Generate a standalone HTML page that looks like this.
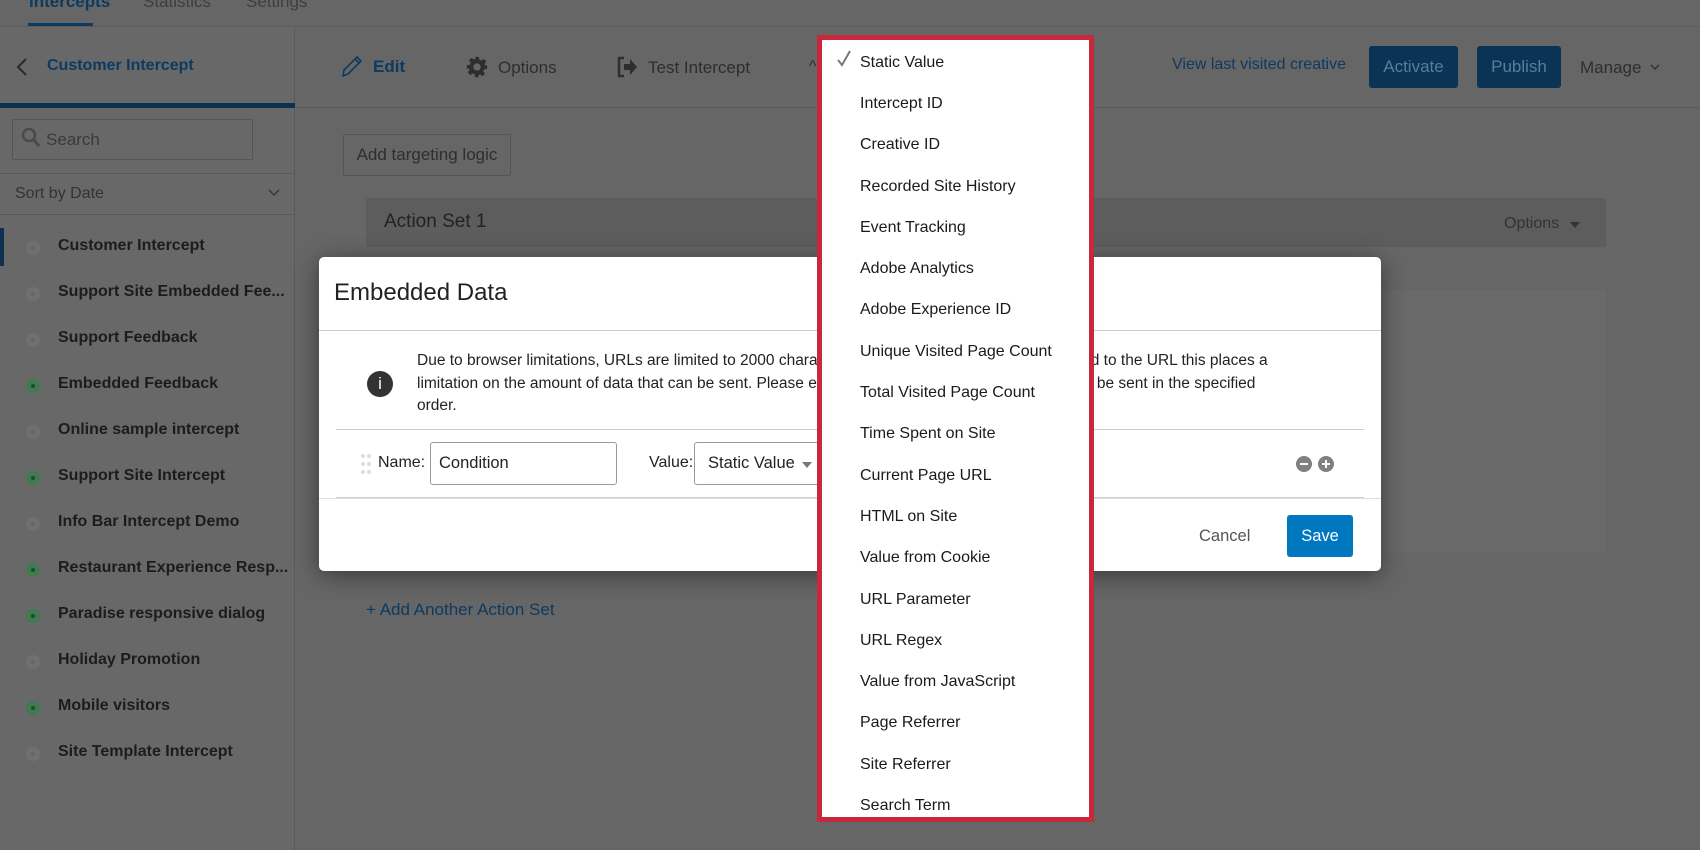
<!DOCTYPE html>
<html><head><meta charset="utf-8"><style>
*{box-sizing:border-box;margin:0;padding:0}
body{width:1700px;height:850px;overflow:hidden;background:#666;font-family:"Liberation Sans",sans-serif;position:relative;color:#1e1e1e}
.a{position:absolute;white-space:nowrap}
.side{position:absolute;left:0;top:27px;width:295px;height:823px;background:#686868;border-right:1px solid #5a5a5a}
.item{position:absolute;left:58px;font-weight:bold;font-size:16px;color:#1c1c1c}
.dot{position:absolute;left:26px;width:14px;height:14px;border-radius:50%;background:#707070}
.dot i{position:absolute;left:5px;top:5px;width:4px;height:4px;border-radius:50%;background:#666}
.dot.g{background:#3f7a50}.dot.g i{background:#1e4d2b}
.dd div{position:absolute;left:38px;font-size:16px;color:#1a1a1a}
</style></head><body>
<div class="a" style="left:0;top:0;width:1700px;height:27px;border-bottom:1px solid #5c5c5c"></div>
<div class="a" style="left:29px;top:-8px;font-size:17px;font-weight:bold;color:#0d3a61">Intercepts</div>
<div class="a" style="left:28px;top:23px;width:65px;height:3px;background:#0d3a61"></div>
<div class="a" style="left:143px;top:-8px;font-size:17px;color:#3e3e3e">Statistics</div>
<div class="a" style="left:246px;top:-8px;font-size:17px;color:#3e3e3e">Settings</div>
<div class="side"></div>
<div class="a" style="left:0;top:103px;width:295px;height:5px;background:#0d3050"></div>
<svg class="a" style="left:15px;top:57px" width="14" height="20"><path d="M11 2L3 10l8 8" stroke="#2a2a2a" stroke-width="2" fill="none"/></svg>
<div class="a" style="left:47px;top:57px;font-size:16px;font-weight:bold;color:#0d3a61">Customer Intercept</div>
<div class="a" style="left:12px;top:119px;width:241px;height:41px;border:1px solid #555;border-radius:2px"></div>
<svg class="a" style="left:21px;top:127px" width="20" height="22"><circle cx="8" cy="8" r="6" stroke="#4a4a4a" stroke-width="2.5" fill="none"/><path d="M12 12l6 7" stroke="#4a4a4a" stroke-width="3"/></svg>
<div class="a" style="left:46px;top:130px;font-size:17px;color:#3a3a3a">Search</div>
<div class="a" style="left:0;top:173px;width:295px;height:42px;border-top:1px solid #595959;border-bottom:1px solid #595959"></div>
<div class="a" style="left:15px;top:185px;font-size:16px;color:#333">Sort by Date</div>
<svg class="a" style="left:268px;top:189px" width="12" height="8"><path d="M1 1l5 5 5-5" stroke="#333" stroke-width="1.3" fill="none"/></svg>
<div class="a" style="left:0;top:228px;width:4px;height:38px;background:#0d3050"></div>
<div class="dot" style="top:241px"><i></i></div><div class="item" style="top:237px">Customer Intercept</div>
<div class="dot" style="top:287px"><i></i></div><div class="item" style="top:283px">Support Site Embedded Fee...</div>
<div class="dot" style="top:333px"><i></i></div><div class="item" style="top:329px">Support Feedback</div>
<div class="dot g" style="top:379px"><i></i></div><div class="item" style="top:375px">Embedded Feedback</div>
<div class="dot" style="top:425px"><i></i></div><div class="item" style="top:421px">Online sample intercept</div>
<div class="dot g" style="top:471px"><i></i></div><div class="item" style="top:467px">Support Site Intercept</div>
<div class="dot" style="top:517px"><i></i></div><div class="item" style="top:513px">Info Bar Intercept Demo</div>
<div class="dot g" style="top:563px"><i></i></div><div class="item" style="top:559px">Restaurant Experience Resp...</div>
<div class="dot g" style="top:609px"><i></i></div><div class="item" style="top:605px">Paradise responsive dialog</div>
<div class="dot" style="top:655px"><i></i></div><div class="item" style="top:651px">Holiday Promotion</div>
<div class="dot g" style="top:701px"><i></i></div><div class="item" style="top:697px">Mobile visitors</div>
<div class="dot" style="top:747px"><i></i></div><div class="item" style="top:743px">Site Template Intercept</div>
<div class="a" style="left:296px;top:107px;width:1404px;height:1px;background:#595959"></div>
<svg class="a" style="left:340px;top:55px" width="24" height="24"><path d="M3 21l1-6L17 2l4 4L8 19z M15 4l4 4" stroke="#0d3a61" stroke-width="1.6" fill="none"/></svg>
<div class="a" style="left:373px;top:57px;font-size:17px;font-weight:bold;color:#0d3a61">Edit</div>
<svg class="a" style="left:466px;top:56px" width="22" height="22" viewBox="0 0 24 24"><path fill="#2e2e2e" d="M10 1h4l.6 3.2 2 .9 2.7-1.9 2.8 2.8-1.9 2.7.9 2L23 10v4l-3.2.6-.9 2 1.9 2.7-2.8 2.8-2.7-1.9-2 .9L14 23h-4l-.6-3.2-2-.9-2.7 1.9-2.8-2.8 1.9-2.7-.9-2L1 14v-4l3.2-.6.9-2L3.2 4.7 6 1.9l2.7 1.9 2-.9z M12 8a4 4 0 100 8 4 4 0 000-8z" fill-rule="evenodd"/></svg>
<div class="a" style="left:498px;top:58px;font-size:17px;color:#2e2e2e">Options</div>
<svg class="a" style="left:616px;top:56px" width="22" height="22"><path d="M8 2H3v18h5" stroke="#2e2e2e" stroke-width="2.5" fill="none"/><path d="M8 8h6V3l7 8-7 8v-5H8z" fill="#2e2e2e"/></svg>
<div class="a" style="left:648px;top:58px;font-size:17px;color:#2e2e2e">Test Intercept</div>
<div class="a" style="left:809px;top:58px;font-size:16px;color:#2e2e2e">^</div>
<div class="a" style="left:1172px;top:56px;font-size:16px;color:#0d3a61">View last visited creative</div>
<div class="a" style="left:1369px;top:46px;width:89px;height:42px;background:#0a3356;border-radius:3px;color:#5a7c97;font-size:17px;text-align:center;line-height:42px">Activate</div>
<div class="a" style="left:1477px;top:46px;width:84px;height:42px;background:#0a3356;border-radius:3px;color:#5a7c97;font-size:17px;text-align:center;line-height:42px">Publish</div>
<div class="a" style="left:1580px;top:58px;font-size:17px;color:#2e2e2e">Manage</div>
<svg class="a" style="left:1650px;top:64px" width="10" height="7"><path d="M1 1l4 4 4-4" stroke="#2e2e2e" stroke-width="1.3" fill="none"/></svg>
<div class="a" style="left:343px;top:134px;width:168px;height:42px;border:1px solid #555;border-radius:2px;font-size:17px;color:#2e2e2e;text-align:center;line-height:40px">Add targeting logic</div>
<div class="a" style="left:366px;top:198px;width:1240px;height:49px;background:#5d5d5d;border-radius:2px"></div>
<div class="a" style="left:384px;top:211px;font-size:19px;color:#222">Action Set 1</div>
<div class="a" style="left:1504px;top:215px;font-size:16px;color:#333">Options</div>
<svg class="a" style="left:1570px;top:222px" width="10" height="6"><path d="M0 0h10L5 6z" fill="#333"/></svg>
<div class="a" style="left:366px;top:290px;width:1240px;height:263px;background:#696969"></div>
<div class="a" style="left:366px;top:600px;font-size:17px;color:#0d3a61">+ Add Another Action Set</div>
<div class="a" style="left:319px;top:257px;width:1062px;height:314px;background:#fff;border-radius:5px;box-shadow:0 4px 24px rgba(0,0,0,.45)">
 <div class="a" style="left:15px;top:22px;font-size:24px;color:#222">Embedded Data</div>
 <div class="a" style="left:0;top:73px;width:1062px;height:1px;background:#ccc"></div>
 <div class="a" style="left:48px;top:114px;width:26px;height:26px;border-radius:50%;background:#333;color:#fff;font-size:17px;text-align:center;line-height:26px">i</div>
 <div class="a" style="left:98px;top:93px;font-size:15.5px;line-height:22.5px;color:#222;white-space:normal;width:880px">Due to browser limitations, URLs are limited to 2000 characters. Since embedded data is appended to the URL this places a limitation on the amount of data that can be sent. Please ensure that important embedded data will be sent in the specified order.</div>
 <div class="a" style="left:17px;top:172px;width:1028px;height:1px;background:#ccc"></div>
 <svg class="a" style="left:41px;top:196px" width="12" height="22"><g fill="#ddd"><circle cx="3" cy="3" r="2"/><circle cx="9" cy="3" r="2"/><circle cx="3" cy="11" r="2"/><circle cx="9" cy="11" r="2"/><circle cx="3" cy="19" r="2"/><circle cx="9" cy="19" r="2"/></g></svg>
 <div class="a" style="left:59px;top:197px;font-size:16px;color:#222">Name:</div>
 <div class="a" style="left:111px;top:185px;width:187px;height:43px;border:1px solid #999;border-radius:3px;font-size:16.5px;line-height:41px;padding-left:8px;color:#222">Condition</div>
 <div class="a" style="left:330px;top:197px;font-size:16px;color:#222">Value:</div>
 <div class="a" style="left:375px;top:185px;width:130px;height:43px;border:1px solid #999;border-radius:3px;font-size:16.5px;line-height:41px;padding-left:13px;color:#222;background:#fff">Static Value</div>
 <svg class="a" style="left:483px;top:205px" width="10" height="6"><path d="M0 0h10L5 6z" fill="#777"/></svg>
 <div class="a" style="left:977px;top:199px;width:16px;height:16px;border-radius:50%;background:#808080"><i style="position:absolute;left:4px;top:7px;width:8px;height:2.4px;background:#fff"></i></div>
 <div class="a" style="left:999px;top:199px;width:16px;height:16px;border-radius:50%;background:#808080"><i style="position:absolute;left:4px;top:7px;width:8px;height:2.4px;background:#fff"></i><i style="position:absolute;left:7px;top:4px;width:2.4px;height:8px;background:#fff"></i></div>
 <div class="a" style="left:17px;top:240px;width:1028px;height:2px;background:#d0d0d0"></div>
 <div class="a" style="left:0;top:241px;width:1062px;height:1px;background:#ddd"></div>
 <div class="a" style="left:880px;top:270px;font-size:16.5px;color:#555">Cancel</div>
 <div class="a" style="left:968px;top:258px;width:66px;height:42px;background:#0078c0;border-radius:3px;color:#fff;font-size:16.5px;text-align:center;line-height:42px">Save</div>
</div>
<div class="a dd" style="left:817px;top:35px;width:277px;height:787px;background:#fff;border:5px solid #c8283a">
 <svg class="a" style="left:14px;top:10px" width="16" height="18"><path d="M2 10l4 5L14 1" stroke="#777" stroke-width="2" fill="none"/></svg>
 <div style="top:14px">Static Value</div>
 <div style="top:55px">Intercept ID</div>
 <div style="top:96px">Creative ID</div>
 <div style="top:138px">Recorded Site History</div>
 <div style="top:179px">Event Tracking</div>
 <div style="top:220px">Adobe Analytics</div>
 <div style="top:261px">Adobe Experience ID</div>
 <div style="top:303px">Unique Visited Page Count</div>
 <div style="top:344px">Total Visited Page Count</div>
 <div style="top:385px">Time Spent on Site</div>
 <div style="top:427px">Current Page URL</div>
 <div style="top:468px">HTML on Site</div>
 <div style="top:509px">Value from Cookie</div>
 <div style="top:551px">URL Parameter</div>
 <div style="top:592px">URL Regex</div>
 <div style="top:633px">Value from JavaScript</div>
 <div style="top:674px">Page Referrer</div>
 <div style="top:716px">Site Referrer</div>
 <div style="top:757px">Search Term</div>
</div>
</body></html>
